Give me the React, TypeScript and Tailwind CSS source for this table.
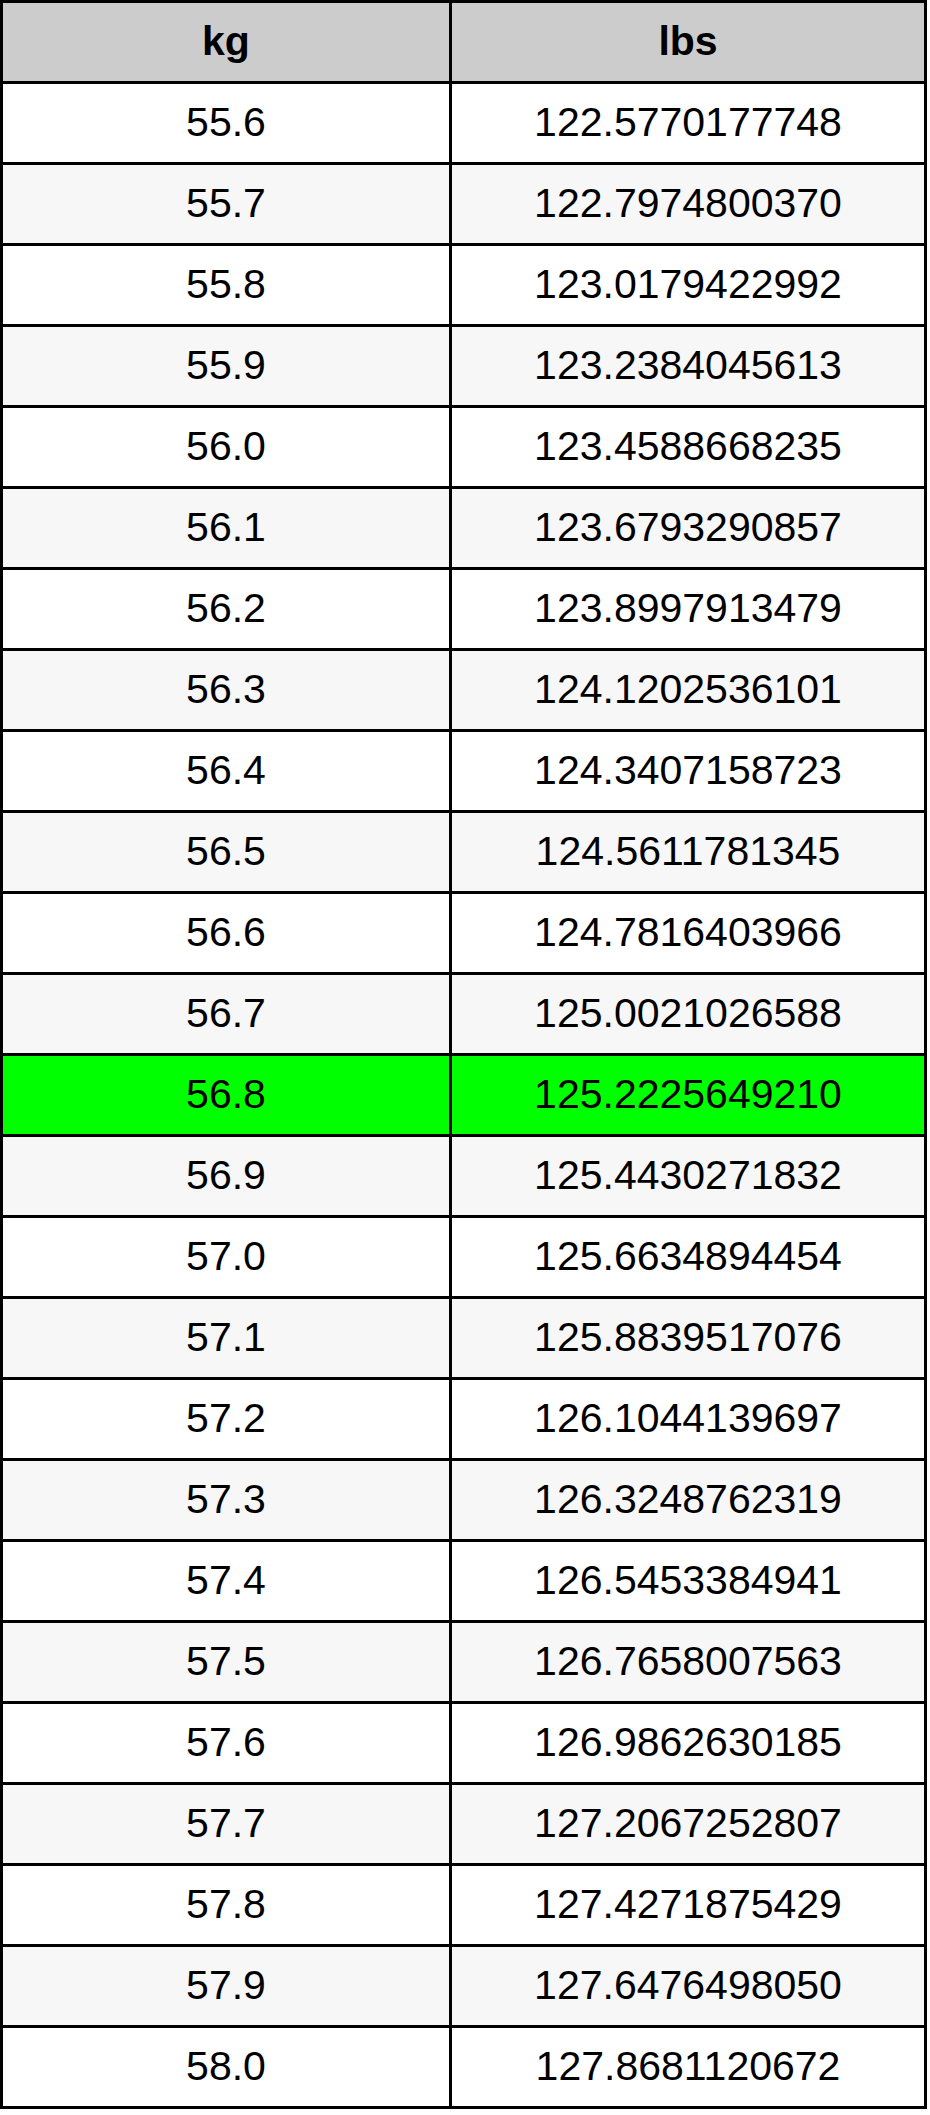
const rows: [string, string][] = [
  ["55.6", "122.5770177748"],
  ["55.7", "122.7974800370"],
  ["55.8", "123.0179422992"],
  ["55.9", "123.2384045613"],
  ["56.0", "123.4588668235"],
  ["56.1", "123.6793290857"],
  ["56.2", "123.8997913479"],
  ["56.3", "124.1202536101"],
  ["56.4", "124.3407158723"],
  ["56.5", "124.5611781345"],
  ["56.6", "124.7816403966"],
  ["56.7", "125.0021026588"],
  ["56.8", "125.2225649210"],
  ["56.9", "125.4430271832"],
  ["57.0", "125.6634894454"],
  ["57.1", "125.8839517076"],
  ["57.2", "126.1044139697"],
  ["57.3", "126.3248762319"],
  ["57.4", "126.5453384941"],
  ["57.5", "126.7658007563"],
  ["57.6", "126.9862630185"],
  ["57.7", "127.2067252807"],
  ["57.8", "127.4271875429"],
  ["57.9", "127.6476498050"],
  ["58.0", "127.8681120672"],
];

export default function App() {
  return (
    <div className="min-h-screen bg-white font-['Liberation_Sans',Arial,sans-serif] text-black">
      <div className="w-[927px] border-l-[3px] border-t-[3px] border-black">
        {/* header */}
        <div className="flex h-[81px] bg-[#cccccc] text-[41px] font-bold">
          <div className="flex w-[449px] items-center justify-center border-r-[3px] border-b-[3px] border-black">
            kg
          </div>
          <div className="flex w-[475px] items-center justify-center border-r-[3px] border-b-[3px] border-black">
            lbs
          </div>
        </div>
        {rows.map(([kg, lbs], i) => (
          <div
            key={kg}
            className={
              kg === "56.8"
                ? "flex h-[81px] bg-[#00ff00] text-[41px]"
                : i % 2 === 1
                  ? "flex h-[81px] bg-[#f7f7f7] text-[41px]"
                  : "flex h-[81px] bg-white text-[41px]"
            }
          >
            <div className="flex w-[449px] items-center justify-center border-r-[3px] border-b-[3px] border-black">
              {kg}
            </div>
            <div className="flex w-[475px] items-center justify-center border-r-[3px] border-b-[3px] border-black">
              {lbs}
            </div>
          </div>
        ))}
      </div>
    </div>
  );
}
